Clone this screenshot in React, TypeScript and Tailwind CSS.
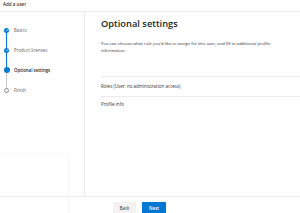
import React from "react";

type StepState = "done" | "current" | "todo";

const steps: { label: string; state: StepState; top: string; bottom: string }[] = [
  { label: "Basics", state: "done", top: "bg-transparent", bottom: "bg-[#0078d4]" },
  { label: "Product licenses", state: "done", top: "bg-[#0078d4]", bottom: "bg-[#0078d4]" },
  { label: "Optional settings", state: "current", top: "bg-[#0078d4]", bottom: "bg-[#c8c6c4]" },
  { label: "Finish", state: "todo", top: "bg-[#c8c6c4]", bottom: "bg-transparent" },
];

function StepIcon({ state }: { state: StepState }) {
  if (state === "done") {
    return (
      <div className="w-[5px] h-[5px] rounded-full bg-[#0078d4] flex items-center justify-center shrink-0">
        <svg width="4" height="4" viewBox="0 0 10 10">
          <path d="M2 5.2 L4.2 7.3 L8 2.8" fill="none" stroke="white" strokeWidth="1.6" />
        </svg>
      </div>
    );
  }
  if (state === "current") {
    return <div className="w-[6px] h-[6px] rounded-full bg-[#0078d4] shrink-0" />;
  }
  return <div className="w-[5px] h-[5px] rounded-full border border-[#8a8886] bg-white shrink-0" />;
}

export default function App() {
  return (
    <div
      className="relative w-[300px] h-[213px] overflow-hidden bg-white text-[#323130]"
      style={{ fontFamily: '"Open Sans", "Noto Sans", sans-serif' }}
    >
      <div className="h-[12px] border-b border-[#edebe9] px-[3px] pt-[1px]">
        <div className="text-[4.5px] leading-[6px] font-semibold">Add a user</div>
      </div>
      <div className="flex h-[184px]">
        <div className="w-[85px] border-r border-[#edebe9] pt-[8px]">
          {steps.map((s) => (
            <div key={s.label} className="flex h-[20px]">
              <div className="w-[13px] flex flex-col items-center">
                <div className={`w-px flex-1 ${s.top}`} />
                <StepIcon state={s.state} />
                <div className={`w-px flex-1 ${s.bottom}`} />
              </div>
              <div
                className={`ml-[1px] flex items-center text-[4.4px] ${
                  s.state === "current" ? "font-semibold text-[#201f1e]" : "text-[#605e5c]"
                }`}
              >
                {s.label}
              </div>
            </div>
          ))}
        </div>
        <div className="flex-1 pl-[16px] pt-[6px]">
          <div className="text-[9.3px] leading-[12px] font-semibold text-[#201f1e]">Optional settings</div>
          <div className="mt-[10px] text-[4.25px] leading-[7px] text-[#323130]">
            You can choose what role you'd like to assign for this user, and fill in additional profile
            <br />
            information.
          </div>
          <div className="mt-[22px] border-t border-[#edebe9] h-[20px] flex items-center text-[4.5px]">
            Roles (User: no administration access)
          </div>
          <div className="border-t border-[#edebe9] pt-[4px] text-[4.5px] leading-[7px]">Profile info</div>
        </div>
      </div>
      <div className="border-t border-[#edebe9] h-[17px] flex items-start pl-[113px] pt-[5px] gap-[6px]">
        <div className="w-[23px] h-[12px] bg-[#f3f2f1] flex items-center justify-center text-[4.4px] text-[#323130]">
          Back
        </div>
        <div className="w-[24px] h-[12px] bg-[#0078d4] flex items-center justify-center text-[4.4px] font-semibold text-white">
          Next
        </div>
      </div>
      <div className="absolute left-0 top-[153px] w-[69px] h-[60px] border-t border-r border-[#f7f7f7] pointer-events-none" />
    </div>
  );
}
